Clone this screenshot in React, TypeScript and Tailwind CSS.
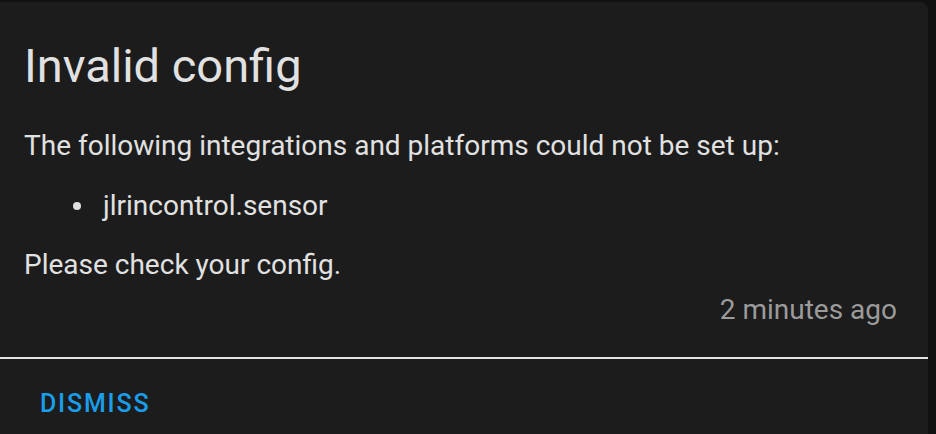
export default function App() {
  return (
    <div className="w-[936px] h-[434px] overflow-hidden bg-[#111111] pt-[2px] font-['Roboto',sans-serif]">
      <div className="w-[928px] h-[440px] bg-[#1c1c1c] rounded-tr-[8px] flex flex-col text-[#e1e1e1]">
        {/* Content */}
        <div className="pl-[24px] pr-[31px] pt-[36px]">
          <h1 className="text-[47px] leading-[56px] font-normal">Invalid config</h1>
          <p className="mt-[34px] text-[28px] leading-[36px]">
            The following integrations and platforms could not be set up:
          </p>
          <ul className="mt-[24px] pl-[49px] text-[28px] leading-[36px]">
            <li className="flex items-center">
              <span className="w-[8px] h-[8px] rounded-full bg-[#e1e1e1] mr-[22px]" />
              jlrincontrol.sensor
            </li>
          </ul>
          <p className="mt-[23px] text-[28px] leading-[36px]">Please check your config.</p>
          <div className="mt-[9px] text-right text-[28px] leading-[36px] text-[#9b9b9b]">
            2 minutes ago
          </div>
        </div>
        <div className="mt-[29px] h-[2px] bg-[#e3e3e3]" />
        {/* Actions */}
        <div className="pl-[40px] pt-[29px]">
          <button className="text-[25px] leading-[32px] font-medium tracking-[1.8px] text-[#1a9eea] uppercase">
            Dismiss
          </button>
        </div>
      </div>
    </div>
  );
}
